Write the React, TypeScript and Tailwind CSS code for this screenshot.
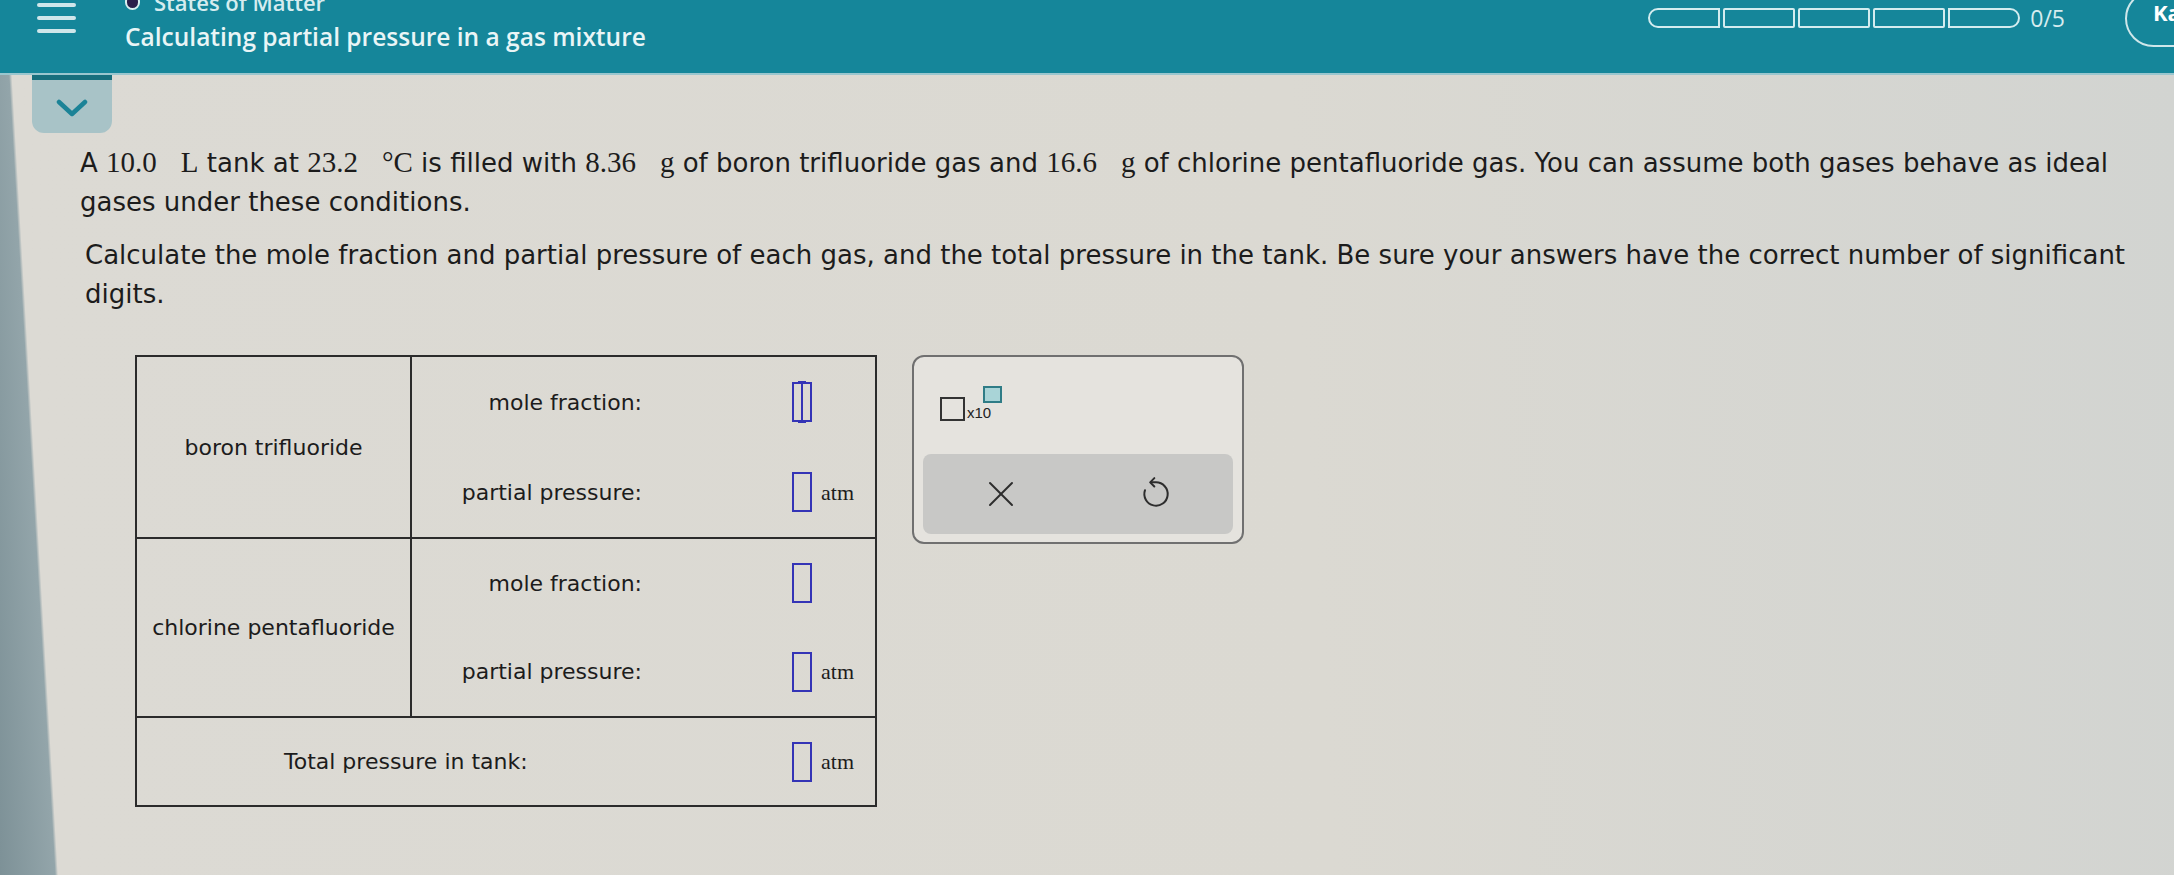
import { X } from 'lucide-react'

function Qty({ n, u }: { n: string; u: string }) {
  return (
    <span className="font-['Liberation_Serif',serif] text-[29px]">
      {n}
      <span className="ml-[24px]">{u}</span>
    </span>
  )
}

function AnswerBox({ focused = false }: { focused?: boolean }) {
  return (
    <span className="relative inline-flex h-[40px] w-[20px] shrink-0 items-center justify-center border-2 border-[#3434b6]">
      {focused && (
        <span className="flex h-[42px] flex-col items-center justify-between">
          <span className="h-[2px] w-[8px] bg-[#3434b6]" />
          <span className="w-[2px] flex-1 bg-[#3434b6]" />
          <span className="h-[2px] w-[8px] bg-[#3434b6]" />
        </span>
      )}
    </span>
  )
}

function AnswerRow({ label, unit, focused }: { label: string; unit?: boolean; focused?: boolean }) {
  return (
    <div className="flex flex-1 items-center">
      <div className="w-[230px] text-right">{label}</div>
      <div className="ml-[150px] flex items-center">
        <AnswerBox focused={focused} />
        {unit && <span className="ml-[9px] font-['Liberation_Serif',serif] text-[22px]">atm</span>}
      </div>
    </div>
  )
}

function GasRow({ name, h, focused }: { name: string; h: string; focused?: boolean }) {
  return (
    <div className={`flex border-b-2 border-[#2b2b2b] ${h}`}>
      <div className="flex w-[275px] items-center justify-center border-r-2 border-[#2b2b2b]">{name}</div>
      <div className="flex flex-1 flex-col">
        <AnswerRow label="mole fraction:" focused={focused} />
        <AnswerRow label="partial pressure:" unit />
      </div>
    </div>
  )
}

export default function App() {
  return (
    <div className="flex h-[875px] w-[2174px] flex-col overflow-hidden font-['DejaVu_Sans',sans-serif] text-[#1c1c1c]">
      {/* Top bar */}
      <header className="flex h-[75px] shrink-0 items-start overflow-hidden border-b-2 border-[#9ac6ce] bg-[#15869a] font-['Open_Sans',sans-serif] text-[#e9f5f6]">
        <div className="ml-[37px] mt-[3px] flex flex-col gap-[9px]">
          <span className="h-[4px] w-[39px] rounded-full bg-[#cfe6ea]" />
          <span className="h-[4px] w-[39px] rounded-full bg-[#cfe6ea]" />
          <span className="h-[4px] w-[39px] rounded-full bg-[#cfe6ea]" />
        </div>
        <div className="ml-[49px] -mt-[13px] flex flex-col">
          <div className="flex h-[30px] items-center">
            <span className="h-[16px] w-[15px] rounded-full border-2 border-[#d8eef0] bg-[#2a1d4a]" />
            <span className="ml-[14px] text-[22px] font-semibold text-[#d5ecef]">States of Matter</span>
          </div>
          <div className="mt-[5px] text-[24.5px] leading-[30px] font-semibold">Calculating partial pressure in a gas mixture</div>
        </div>
        <div className="-mr-[66px] ml-auto flex items-start">
          <div className="mt-[8px] flex items-center">
            <div className="flex gap-[3px]">
              <span className="h-[20px] w-[72px] rounded-l-full border-2 border-[#d3ecef]" />
              <span className="h-[20px] w-[72px] rounded-[2px] border-2 border-[#d3ecef]" />
              <span className="h-[20px] w-[72px] rounded-[2px] border-2 border-[#d3ecef]" />
              <span className="h-[20px] w-[72px] rounded-[2px] border-2 border-[#d3ecef]" />
              <span className="h-[20px] w-[72px] rounded-r-full border-2 border-[#d3ecef]" />
            </div>
            <span className="ml-[10px] text-[23px] leading-[20px] text-[#d6ecef]">0/5</span>
          </div>
          <div className="ml-[60px] -mt-[10px] h-[57px] w-[115px] shrink-0 rounded-full border-2 border-[#cfe7ea] pl-[26px] pt-[6px]">
            <span className="text-[22px] leading-[28px] font-bold text-white">Ka</span>
          </div>
        </div>
      </header>

      {/* Question area */}
      <main className="flex flex-1 flex-col bg-[linear-gradient(86.7deg,#7d9197_0px,#93a5aa_55px,#dcdad4_58px,#dbd9d2_60%,#d2d4d1_100%)]">
        <div className="ml-[32px] flex h-[58px] w-[80px] items-center justify-center rounded-b-[12px] border-t-[5px] border-[#176f7d] bg-[#a8c3c7] pt-[2px]">
          <svg width="32" height="20" viewBox="0 0 32 20" fill="none">
            <polyline points="3,4 16,16 29,4" stroke="#1b8397" strokeWidth="4.5" strokeLinecap="round" strokeLinejoin="round" />
          </svg>
        </div>

        <p className="ml-[80px] mt-[10px] whitespace-nowrap text-[26px] leading-[39px]">
          A <Qty n="10.0" u="L" /> tank at <Qty n="23.2" u="°C" /> is filled with <Qty n="8.36" u="g" /> of boron trifluoride gas and{' '}
          <Qty n="16.6" u="g" /> of chlorine pentafluoride gas. You can assume both gases behave as ideal
          <br />
          gases under these conditions.
        </p>

        <p className="ml-[85px] mt-[14px] whitespace-nowrap text-[26px] leading-[39px]">
          Calculate the mole fraction and partial pressure of each gas, and the total pressure in the tank. Be sure your answers have the correct number of significant
          <br />
          digits.
        </p>

        <div className="ml-[135px] mt-[41px] flex items-start gap-[35px]">
          {/* Answer table */}
          <div className="w-[742px] border-2 border-[#2b2b2b] text-[22px]">
            <GasRow name="boron trifluoride" h="h-[182px]" focused />
            <GasRow name="chlorine pentafluoride" h="h-[179px]" />
            <div className="flex h-[87px] items-center">
              <div className="w-[655px] pl-[147px]">Total pressure in tank:</div>
              <AnswerBox />
              <span className="ml-[9px] font-['Liberation_Serif',serif] text-[22px]">atm</span>
            </div>
          </div>

          {/* Tool palette */}
          <div className="flex h-[189px] w-[332px] flex-col rounded-[12px] border-2 border-[#707070] bg-[#e5e3de] px-[9px] pb-[8px]">
            <div className="flex-1 pl-[17px] pt-[29px]">
              <div className="flex h-[35px] items-end">
                <span className="h-[24px] w-[25px] border-2 border-[#333]" />
                <span className="mb-[1px] ml-[2px] font-['Liberation_Sans',sans-serif] text-[15px] leading-none text-[#222]">x10</span>
                <span className="-ml-[8px] h-[17px] w-[19px] self-start border-2 border-[#2f7c86] bg-[#a9d4d7]" />
              </div>
            </div>
            <div className="grid h-[80px] grid-cols-2 place-items-center rounded-[8px] bg-[#c8c8c6]">
              <X className="h-[44px] w-[44px] text-[#2d2d2d]" strokeWidth={1.1} />
              <svg width="40" height="40" viewBox="0 0 24 24" fill="none" stroke="#2d2d2d" strokeWidth="1.2" strokeLinecap="round" strokeLinejoin="round">
                <path d="M9 5h3a7 7 0 1 1-6.6 4.7" />
                <path d="M11 2.5 8.5 5 11 7.5" />
              </svg>
            </div>
          </div>
        </div>
      </main>
    </div>
  )
}
